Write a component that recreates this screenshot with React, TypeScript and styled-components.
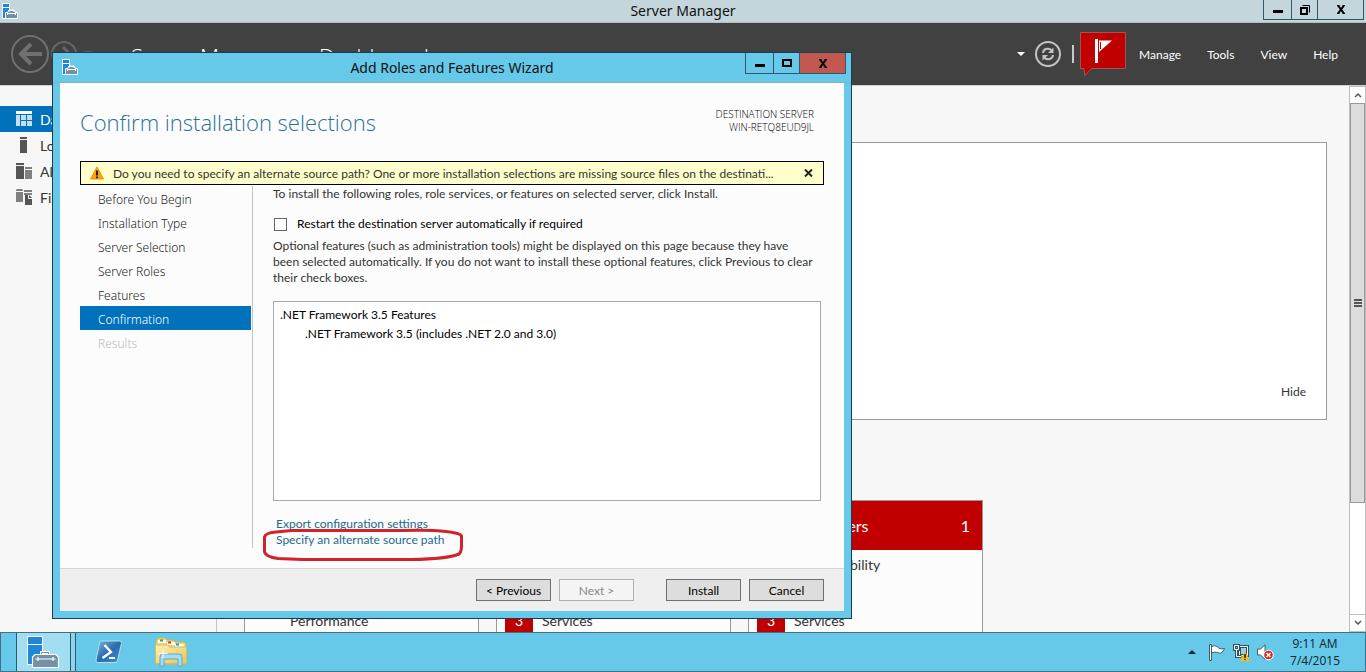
import React from "react";
import styled, { createGlobalStyle } from "styled-components";

const sky = "#66c9e9";
const red = "#c00000";
const blue = "#0072bc";
const titleFont = `"Noto Sans", "Open Sans", sans-serif`;
const lightFont = `"Open Sans", "Noto Sans", sans-serif`;

const GlobalStyle = createGlobalStyle`
  * { box-sizing: border-box; }
  body { margin: 0; }
  button, input { font: inherit; color: inherit; margin: 0; }
  svg { display: block; flex: none; }
`;

const Desktop = styled.div`
  position: relative;
  display: flex;
  flex-direction: column;
  height: 100vh;
  overflow: hidden;
  background: #f7f7f7;
  color: #333;
  font: 12px/16px Lato, "Open Sans", sans-serif;
`;

/* Window chrome */
const TitleBar = styled.header<{ $tone: string; $height: number; $line: string }>`
  display: grid;
  grid-template-columns: 120px 1fr 120px;
  flex: none;
  height: ${(p) => p.$height}px;
  background: ${(p) => p.$tone};
  border-bottom: 1px solid ${(p) => p.$line};
  color: #111;
`;
const TitleIcon = styled.span<{ $indent: number; $drop: number }>`
  padding: ${(p) => p.$drop}px 0 0 ${(p) => p.$indent}px;
`;
const WindowTitle = styled.h1`
  margin: 0;
  align-self: center;
  text-align: center;
  font-family: ${titleFont};
  font-size: 14px;
  line-height: 20px;
  font-weight: 400;
  white-space: nowrap;
`;
const WindowButtons = styled.div<{ $inset: number }>`
  display: flex;
  justify-content: flex-end;
  padding-right: ${(p) => p.$inset}px;
`;
const WindowButton = styled.button<{ $width: number; $height: number; $fill?: string }>`
  display: flex;
  align-items: center;
  justify-content: center;
  flex: none;
  width: ${(p) => p.$width}px;
  height: ${(p) => p.$height}px;
  padding: 0;
  border: 1px solid #2c5a6c;
  border-top: 0;
  background: ${(p) => p.$fill ?? "transparent"};
  & + & { margin-left: -1px; }
`;

/* Server Manager header */
const Banner = styled.div`
  display: flex;
  align-items: center;
  flex: none;
  height: 62px;
  padding: 0 28px 0 11px;
  background: #414141;
  color: #fff;
`;
const Crumb = styled.div`
  display: flex;
  gap: 13px;
  flex: 1;
  padding: 4px 0 0 38px;
  font-family: ${lightFont};
  font-size: 22px;
  line-height: 32px;
  font-weight: 300;
  white-space: nowrap;
`;
const IconButton = styled.button<{ $gap?: number }>`
  padding: 0;
  margin-left: ${(p) => p.$gap ?? 0}px;
  border: 0;
  background: none;
`;
const Separator = styled.span`
  width: 2px;
  height: 18px;
  margin: 0 6px 0 11px;
  background: #c8c8c8;
`;
const MenuBar = styled.nav`
  display: flex;
  gap: 26px;
  margin-left: 12px;
`;
const MenuButton = styled.button`
  padding: 2px 0 0;
  border: 0;
  background: none;
  color: #fff;
`;

/* Server Manager body */
const Workspace = styled.div`
  display: flex;
  flex: 1;
  min-height: 0;
  overflow: hidden;
  border-top: 1px solid #d0d0d0;
`;
const Sidebar = styled.nav`
  flex: none;
  width: 217px;
  padding-top: 20px;
  border-right: 1px solid #c4c4c4;
`;
const SideItem = styled.a<{ $active?: boolean }>`
  display: flex;
  align-items: center;
  gap: 8px;
  height: 26px;
  padding-left: 16px;
  background: ${(p) => (p.$active ? blue : "transparent")};
  color: ${(p) => (p.$active ? "#fff" : "#333")};
  font-size: 14px;
  text-decoration: none;
  white-space: nowrap;
`;
const SideLabel = styled.span`
  padding-top: 2px;
`;
const Content = styled.main`
  flex: 1;
  min-width: 0;
  overflow: hidden;
  padding: 56px 22px 0 27px;
`;
const Welcome = styled.section`
  display: flex;
  justify-content: flex-end;
  align-items: flex-end;
  height: 278px;
  padding: 0 20px 19px;
  border: 1px solid #999;
  background: #fff;
`;
const HideButton = styled.button`
  padding: 0;
  border: 0;
  background: none;
`;
const Tiles = styled.div`
  display: flex;
  gap: 17px;
  margin-top: 80px;
`;
const Tile = styled.section`
  flex: none;
  width: 235px;
  height: 180px;
  border: 1px solid #999;
  background: #fcfcfc;
`;
const TileHead = styled.div`
  display: flex;
  justify-content: space-between;
  align-items: center;
  height: 49px;
  padding: 0 12px 0 45px;
  background: ${red};
  color: #fff;
  font-size: 16px;
  line-height: 20px;
`;
const TileRow = styled.div`
  display: flex;
  align-items: center;
  gap: 9px;
  height: 28px;
  padding: 2px 0 0 8px;
  font-size: 14px;
`;
const Count = styled.span<{ $alert?: boolean }>`
  width: 28px;
  height: 24px;
  line-height: 24px;
  text-align: center;
  color: #fff;
  background: ${(p) => (p.$alert ? red : "transparent")};
`;

const ScrollBar = styled.div`
  display: flex;
  flex-direction: column;
  flex: none;
  width: 17px;
  border: 1px solid #bdbdbd;
  background: #fff;
`;
const ScrollArrow = styled.button`
  display: flex;
  align-items: center;
  justify-content: center;
  height: 16px;
  padding: 0;
  border: 0;
  background: #fff;
`;
const ScrollThumb = styled.div`
  display: flex;
  align-items: center;
  justify-content: center;
  flex: 400;
  border: 1px solid #9a9a9a;
  background: #dcdcdc;
`;
const ScrollRest = styled.div`
  flex: 111;
  border-bottom: 1px solid #bdbdbd;
`;

/* Wizard dialog */
const Dialog = styled.section`
  position: absolute;
  top: 52px;
  left: 52px;
  width: 800px;
  max-width: calc(100% - 52px);
  padding: 0 7px 7px;
  border: 1px solid #1d3f4d;
  background: ${sky};
`;
const DialogBar = styled.div`
  margin: 0 -7px;
`;
const Page = styled.div`
  background: #fcfcfc;
`;
const PageHead = styled.div`
  display: flex;
  justify-content: space-between;
  padding: 25px 30px 25px 20px;
`;
const PageTitle = styled.h2`
  margin: 0;
  color: #2a7294;
  font-family: ${lightFont};
  font-size: 22px;
  line-height: 28px;
  font-weight: 300;
`;
const Destination = styled.div`
  color: #000;
  font-family: ${lightFont};
  font-size: 10px;
  font-weight: 300;
  line-height: 13px;
  text-align: right;
`;
const Notice = styled.div`
  display: flex;
  align-items: center;
  gap: 9px;
  height: 24px;
  margin: 0 20px;
  padding: 0 10px 0 9px;
  border: 1px solid #000;
  background: #ffffcc;
`;
const NoticeText = styled.span`
  flex: 1;
  min-width: 0;
  margin-right: 16px;
  padding-top: 2px;
  overflow: hidden;
  white-space: nowrap;
  text-overflow: ellipsis;
`;
const PageBody = styled.div`
  display: flex;
  padding: 1px 23px 20px 20px;
`;
const Steps = styled.nav`
  flex: none;
  width: 173px;
  padding-right: 1px;
  border-right: 1px solid #c4c4c4;
`;
const Step = styled.a<{ $state?: "current" | "disabled" }>`
  display: block;
  padding: 4px 0 0 18px;
  font-family: ${titleFont};
  font-weight: 300;
  line-height: 20px;
  text-decoration: none;
  background: ${(p) => (p.$state === "current" ? blue : "transparent")};
  color: ${(p) => (p.$state === "current" ? "#fff" : p.$state === "disabled" ? "#bbb" : "#222")};
`;
const Details = styled.div`
  flex: 1;
  min-width: 0;
  padding-left: 20px;
`;
const Para = styled.p`
  margin: 0;
`;
const CheckRow = styled.label`
  display: flex;
  align-items: center;
  gap: 10px;
  margin: 14px 0 6px 1px;
  color: #000;
`;
const CheckBox = styled.input`
  appearance: none;
  width: 13px;
  height: 13px;
  border: 1px solid #666;
  background: #fff;
`;
const Selections = styled.ul`
  height: 200px;
  margin: 15px 0;
  padding: 3px 6px;
  border: 1px solid #a8a8a8;
  background: #fff;
  color: #000;
  line-height: 19px;
  list-style: none;
`;
const SubList = styled.ul`
  margin: 0;
  padding-left: 25px;
  list-style: none;
`;
const Links = styled.div`
  position: relative;
  display: flex;
  flex-direction: column;
  align-items: flex-start;
  padding-left: 3px;
`;
const TextLink = styled.a`
  color: #1b6a8c;
  text-decoration: none;
`;
const Marker = styled.svg`
  position: absolute;
  top: 12px;
  left: -11px;
  pointer-events: none;
`;
const Footer = styled.footer`
  display: flex;
  justify-content: flex-end;
  gap: 8px;
  padding: 10px 20px;
  border-top: 1px solid #d6d6d6;
  background: #efefef;
`;
const PushButton = styled.button<{ $apart?: boolean }>`
  width: 75px;
  height: 22px;
  padding: 2px 0 0;
  margin-left: ${(p) => (p.$apart ? 24 : 0)}px;
  border: 1px solid #707070;
  background: #dddddd;
  color: #000;
  white-space: nowrap;
  &:disabled { border-color: #b0b0b0; background: #f4f4f4; color: #888; }
`;

/* Taskbar */
const Taskbar = styled.footer`
  display: flex;
  align-items: center;
  flex: none;
  height: 40px;
  padding-left: 15px;
  border: 1px solid #45707f;
  background: ${sky};
  color: #10242c;
`;
const AppStack = styled.div`
  display: flex;
  align-self: stretch;
  width: 60px;
  padding-right: 4px;
  border: solid #2f5866;
  border-width: 0 1px;
  background: #8ad4ee;
`;
const AppButton = styled.button<{ $active?: boolean; $gap?: number }>`
  display: flex;
  align-items: center;
  padding: 0 0 0 ${(p) => (p.$active ? 10 : 0)}px;
  margin-left: ${(p) => p.$gap ?? 0}px;
  border: 0;
  ${(p) => p.$active && "flex: 1; border-right: 1px solid #2f5866; background: #a2ddf2;"}
  ${(p) => !p.$active && "background: none;"}
`;
const Tray = styled.div`
  display: flex;
  align-items: center;
  gap: 7px;
  margin-left: auto;
  padding-right: 25px;
`;
const Clock = styled.time`
  margin-left: 9px;
  text-align: center;
  font-family: ${lightFont};
  line-height: 17px;
`;

function ToolboxIcon() {
  return (
    <svg width="32" height="32" viewBox="0 0 32 32" aria-hidden="true">
      <path d="M.5.500h15v28H.5z" fill="#1f87d8" stroke="#fff" />
      <path d="M0 8.500h16" stroke="#fff" />
      <path d="M14.500 19v-2.500h7V19" fill="none" stroke="#fff" strokeWidth="3" />
      <path d="M14.500 19v-2.500h7V19" fill="none" stroke="#7291a6" />
      <path d="M8 18.500h21l2.500 2.500v10.500H5.500V21z" fill="#7291a6" stroke="#fff" strokeWidth="1.200" />
      <path d="M8.500 23h20M11 21v4M26 21v4" stroke="#fff" strokeWidth="1.200" />
    </svg>
  );
}

function ToolboxIconSmall() {
  return (
    <svg width="16" height="16" viewBox="0 0 16 16" aria-hidden="true">
      <path d="M.5.500h7v15h-7z" fill="#1f87d8" stroke="#fff" />
      <path d="M0 4.500h8" stroke="#fff" />
      <path d="M3.500 15.500v-6h2l1.500-2.500h5l1.500 2.500h2v6z" fill="#7291a6" stroke="#fff" />
      <path d="M7 9V7.500h5V9M5 10.500h9M5.500 9.500v2.500M13.500 9.500v2.500" fill="none" stroke="#fff" />
    </svg>
  );
}

function MinimizeGlyph() {
  return (
    <svg width="10" height="9" viewBox="0 0 10 9" aria-hidden="true">
      <path d="M0 5h10v3H0z" fill="#000" />
    </svg>
  );
}

function CloseGlyph() {
  return (
    <svg width="10" height="9" viewBox="0 0 10 9" aria-hidden="true">
      <path d="M1 .5h2.500M6.500 .5H9M1 8.500h2.500M6.500 8.500H9" stroke="#000" />
      <path d="M2 .5l6 8M8 .5l-6 8" stroke="#000" strokeWidth="2" />
    </svg>
  );
}

function Warning({ size }: { size: number }) {
  return (
    <svg width={size} height={size} viewBox="0 0 14 14" aria-hidden="true">
      <path d="M7 1l6.500 12H.5z" fill="#f9a11b" stroke="#f39200" strokeWidth="1" strokeLinejoin="round" />
      <path d="M6 4.500h2V9.500H6zM6 10.500h2v1.800H6z" fill="#222" />
    </svg>
  );
}

function NavIcon({ kind }: { kind: string }) {
  return (
    <svg width="16" height="16" viewBox="0 0 16 16" aria-hidden="true">
      {kind === "dashboard" && (
        <>
          <path d="M0 0h16v3H0z" fill="#fff" />
          <path d="M0 4h4v11H0zM5 4h5v5H5zM5 10h5v5H5zM11 4h5v5h-5zM11 10h5v5h-5z" fill="#c3dff1" />
        </>
      )}
      {kind === "local" && <path d="M4 0h7v2H4zM4 3h7v13H4z" fill="#555" />}
      {kind === "all" && (
        <>
          <path d="M0 0h8v2H0zM0 3h8v13H0z" fill="#555" />
          <path d="M9 4h7v2H9zM9 7h7v9H9z" fill="#808080" />
        </>
      )}
      {kind === "files" && (
        <>
          <path d="M0 1l1-1h5l1 1v1H0zM0 3h7v10H0zM8 1h8v2H8z" fill="#808080" />
          <path d="M8 4h8v2H8z" fill="#808080" />
          <path d="M9 6h4l3 3v7H9z" fill="#555" />
          <path d="M12.500 6v3.500H16" stroke="#f7f7f7" fill="none" />
        </>
      )}
    </svg>
  );
}

const sideLinks = [
  { kind: "dashboard", label: "Dashboard" },
  { kind: "local", label: "Local Server" },
  { kind: "all", label: "All Servers" },
  { kind: "files", label: "File and Storage" },
];

type TileRowData = { label?: string; count?: number };
const tiles: { id: string; title?: string; total?: number; rows: TileRowData[] }[] = [
  { id: "storage", rows: [{}, {}, { label: "Performance" }] },
  { id: "local", rows: [{}, {}, { label: "Services", count: 3 }] },
  { id: "all", title: "All Servers", total: 1, rows: [{ label: "Manageability" }, {}, { label: "Services", count: 3 }] },
];

const steps: { label: string; state?: "current" | "disabled" }[] = [
  { label: "Before You Begin" },
  { label: "Installation Type" },
  { label: "Server Selection" },
  { label: "Server Roles" },
  { label: "Features" },
  { label: "Confirmation", state: "current" },
  { label: "Results", state: "disabled" },
];

function ManagerHeader() {
  return (
    <>
      <TitleBar $tone="#c4d6dc" $height={23} $line="#b0bfc5">
        <TitleIcon $indent={2} $drop={3}>
          <ToolboxIconSmall />
        </TitleIcon>
        <WindowTitle>Server Manager</WindowTitle>
        <WindowButtons $inset={2}>
          <WindowButton $width={29} $height={20} aria-label="Minimize"><MinimizeGlyph /></WindowButton>
          <WindowButton $width={27} $height={20} aria-label="Restore">
            <svg width="10" height="10" viewBox="0 0 10 10" aria-hidden="true">
              <path d="M1 3h6v6H1z" fill="none" stroke="#000" strokeWidth="2" />
              <path d="M2.500 .5h7v7" fill="none" stroke="#000" />
            </svg>
          </WindowButton>
          <WindowButton $width={47} $height={20} aria-label="Close"><CloseGlyph /></WindowButton>
        </WindowButtons>
      </TitleBar>
      <Banner>
        <IconButton aria-label="Back">
          <svg width="38" height="38" viewBox="0 0 38 38" aria-hidden="true">
            <circle cx="19" cy="19" r="18" fill="none" stroke="#707070" strokeWidth="2" />
            <path d="M31 19H10M20 9L10 19l10 10" fill="none" stroke="#707070" strokeWidth="4" />
          </svg>
        </IconButton>
        <IconButton $gap={2} aria-label="Forward">
          <svg width="26" height="26" viewBox="0 0 26 26" aria-hidden="true">
            <circle cx="13" cy="13" r="12" fill="none" stroke="#666" strokeWidth="2" />
            <path d="M6 13h13M12 6l7 7-7 7" fill="none" stroke="#666" strokeWidth="3" />
          </svg>
        </IconButton>
        <IconButton $gap={6} aria-label="History">
          <svg width="10" height="6" viewBox="0 0 10 6" aria-hidden="true">
            <path d="M0 0h10L5 6z" fill="#5a5a5a" />
          </svg>
        </IconButton>
        <Crumb>
          <span>Server Manager</span>
          <span>›</span>
          <span>Dashboard</span>
        </Crumb>
        <IconButton aria-label="Refresh options">
          <svg width="8" height="4" viewBox="0 0 8 4" aria-hidden="true">
            <path d="M0 0h8L4 4z" fill="#fff" />
          </svg>
        </IconButton>
        <IconButton $gap={10} aria-label="Refresh">
          <svg width="26" height="26" viewBox="0 0 26 26" aria-hidden="true">
            <circle cx="13" cy="13" r="12" fill="none" stroke="#c4c4c4" strokeWidth="2" />
            <path d="M8 12c.5-5 7-5.500 9-2M18 14c-.5 5-7 5.500-9 2" fill="none" stroke="#c4c4c4" strokeWidth="2" />
            <path d="M18.500 6.500v5.500h-5.500zM7.500 19.500V14H13z" fill="#c4c4c4" />
          </svg>
        </IconButton>
        <Separator />
        <IconButton aria-label="Notifications">
          <svg width="47" height="44" viewBox="0 0 47 44" aria-hidden="true">
            <path d="M.5.500h45v36H11.500L5 43.500l-1-7H.5z" fill={red} stroke="#a8524f" />
            <path d="M15 7h3v24h-3z" fill="#fff" />
            <path d="M19 8.500h13L19 20z" fill="#fff" />
            <path d="M20.500 10v7" stroke={red} />
          </svg>
        </IconButton>
        <MenuBar>
          <MenuButton>Manage</MenuButton>
          <MenuButton>Tools</MenuButton>
          <MenuButton>View</MenuButton>
          <MenuButton>Help</MenuButton>
        </MenuBar>
      </Banner>
    </>
  );
}

function ManagerBody() {
  return (
    <Workspace>
      <Sidebar>
        {sideLinks.map((item, i) => (
          <SideItem key={item.kind} href="#" $active={i === 0}>
            <NavIcon kind={item.kind} />
            <SideLabel>{item.label}</SideLabel>
          </SideItem>
        ))}
      </Sidebar>
      <Content>
        <Welcome>
          <HideButton>Hide</HideButton>
        </Welcome>
        <Tiles>
          {tiles.map((tile) => (
            <Tile key={tile.id}>
              <TileHead>
                <span>{tile.title}</span>
                <span>{tile.total}</span>
              </TileHead>
              {tile.rows.map((row, i) => (
                <TileRow key={i}>
                  <Count $alert={row.count !== undefined}>{row.count}</Count>
                  {row.label}
                </TileRow>
              ))}
            </Tile>
          ))}
        </Tiles>
      </Content>
      <ScrollBar>
        <ScrollArrow aria-label="Scroll up">
          <svg width="8" height="6" viewBox="0 0 8 6" aria-hidden="true">
            <path d="M1 5l3-3 3 3" fill="none" stroke="#555" strokeWidth="1.500" />
          </svg>
        </ScrollArrow>
        <ScrollThumb>
          <svg width="8" height="8" viewBox="0 0 8 8" aria-hidden="true">
            <path d="M0 1h8M0 4h8M0 7h8" stroke="#555" strokeWidth="2" />
          </svg>
        </ScrollThumb>
        <ScrollRest />
        <ScrollArrow aria-label="Scroll down">
          <svg width="8" height="6" viewBox="0 0 8 6" aria-hidden="true">
            <path d="M1 1l3 3 3-3" fill="none" stroke="#555" strokeWidth="1.500" />
          </svg>
        </ScrollArrow>
      </ScrollBar>
    </Workspace>
  );
}

function Wizard() {
  return (
    <Dialog role="dialog" aria-label="Add Roles and Features Wizard">
      <DialogBar>
        <TitleBar $tone={sky} $height={30} $line="#7fb3c6">
          <TitleIcon $indent={9} $drop={6}>
            <ToolboxIconSmall />
          </TitleIcon>
          <WindowTitle as="h2">Add Roles and Features Wizard</WindowTitle>
          <WindowButtons $inset={5}>
            <WindowButton $width={29} $height={21} aria-label="Minimize"><MinimizeGlyph /></WindowButton>
            <WindowButton $width={27} $height={21} aria-label="Maximize">
              <svg width="10" height="8" viewBox="0 0 10 8" aria-hidden="true">
                <path d="M1 1h8v6H1z" fill="none" stroke="#000" strokeWidth="2" />
              </svg>
            </WindowButton>
            <WindowButton $width={47} $height={21} $fill="#c2584e" aria-label="Close"><CloseGlyph /></WindowButton>
          </WindowButtons>
        </TitleBar>
      </DialogBar>
      <Page>
        <PageHead>
          <PageTitle>Confirm installation selections</PageTitle>
          <Destination>
            DESTINATION SERVER<br />WIN-RETQ8EUD9JL
          </Destination>
        </PageHead>
        <Notice>
          <Warning size={14} />
          <NoticeText>
            Do you need to specify an alternate source path? One or more installation selections are missing source files on the destinati...
          </NoticeText>
          <IconButton aria-label="Dismiss">
            <svg width="9" height="8" viewBox="0 0 9 8" aria-hidden="true">
              <path d="M1 .5l7 7M8 .5l-7 7" stroke="#222" strokeWidth="2" />
            </svg>
          </IconButton>
        </Notice>
        <PageBody>
          <Steps>
            {steps.map((step) => (
              <Step key={step.label} href="#" $state={step.state}>{step.label}</Step>
            ))}
          </Steps>
          <Details>
            <Para>To install the following roles, role services, or features on selected server, click Install.</Para>
            <CheckRow>
              <CheckBox type="checkbox" />
              Restart the destination server automatically if required
            </CheckRow>
            <Para>
              Optional features (such as administration tools) might be displayed on this page because they have
              <br />
              been selected automatically. If you do not want to install these optional features, click Previous to clear
              <br />
              their check boxes.
            </Para>
            <Selections>
              <li>
                .NET Framework 3.5 Features
                <SubList>
                  <li>.NET Framework 3.5 (includes .NET 2.0 and 3.0)</li>
                </SubList>
              </li>
            </Selections>
            <Links>
              <TextLink href="#">Export configuration settings</TextLink>
              <TextLink href="#">Specify an alternate source path</TextLink>
              <Marker width="202" height="34" viewBox="0 0 202 34" aria-hidden="true">
                <path
                  d="M14 4Q3 5 2.500 9V24Q4 29 16 30.500L40 31.500H150Q185 31 197 26Q199.500 24 199.500 18V8Q198 5 184 3.500Q168 1.500 140 2.500H30Z"
                  fill="none"
                  stroke="#d0242c"
                  strokeWidth="3"
                  strokeLinejoin="round"
                />
              </Marker>
            </Links>
          </Details>
        </PageBody>
        <Footer>
          <PushButton>&lt; Previous</PushButton>
          <PushButton disabled>Next &gt;</PushButton>
          <PushButton $apart>Install</PushButton>
          <PushButton>Cancel</PushButton>
        </Footer>
      </Page>
    </Dialog>
  );
}

function SystemTaskbar() {
  return (
    <Taskbar>
      <AppStack>
        <AppButton $active aria-label="Server Manager"><ToolboxIcon /></AppButton>
      </AppStack>
      <AppButton $gap={19} aria-label="PowerShell">
        <svg width="28" height="24" viewBox="0 0 28 24" aria-hidden="true">
          <defs>
            <linearGradient id="ps" x1="0" y1="0" x2="1" y2="1">
              <stop offset="0" stopColor="#7cb6dc" />
              <stop offset=".5" stopColor="#2a6cae" />
              <stop offset="1" stopColor="#3f8fd0" />
            </linearGradient>
          </defs>
          <path d="M6.500 1h18q2.500 0 2 2.500l-4 17q-.5 2-2.500 2H3q-2.500 0-2-2.500l3.500-17Q5 1 6.500 1z" fill="url(#ps)" stroke="#b9dcf0" />
          <path d="M9.500 5l6.500 7-8.500 6" fill="none" stroke="#fff" strokeWidth="2.400" />
          <path d="M14 18h6" stroke="#fff" strokeWidth="2" />
        </svg>
      </AppButton>
      <AppButton $gap={31} aria-label="File Explorer">
        <svg width="34" height="30" viewBox="0 0 34 30" aria-hidden="true">
          <defs>
            <linearGradient id="folder" x1="0" y1="0" x2="1" y2="1">
              <stop offset="0" stopColor="#fbeeb0" />
              <stop offset="1" stopColor="#e6c85a" />
            </linearGradient>
          </defs>
          <path d="M2 4l2-3h7l2 2h6l2 2h9l2 2v20H2z" fill="#ecd678" stroke="#d3b64e" />
          <path d="M4 3h8v3H4zM13 5h8v3h-8zM21 7h9v3h-9z" fill="#fff" />
          <path d="M6 2.500h3v2H6z" fill="#2fa84f" />
          <path d="M14 4.500h3v2h-3z" fill="#d23b2f" />
          <path d="M22 6.500h3v2h-3z" fill="#2a8fd8" />
          <path d="M1.500 8h12l2 2h17v16.500h-31z" fill="url(#folder)" stroke="#d9bd58" />
          <path d="M6 29v-9q0-3 3-3h16q3 0 3 3v9h-4v-7H10v7z" fill="#a8dcf2" stroke="#5ca8cc" />
          <path d="M9 12v9M4.500 16.500h9" stroke="#fff" />
        </svg>
      </AppButton>
      <Tray>
        <IconButton aria-label="Show hidden icons">
          <svg width="8" height="4" viewBox="0 0 8 4" aria-hidden="true"><path d="M4 0l4 4H0z" fill="#10242c" /></svg>
        </IconButton>
        <IconButton $gap={6} aria-label="Action Center">
          <svg width="17" height="17" viewBox="0 0 17 17" aria-hidden="true">
            <path d="M2.500 2.500q3-1.500 6 0l1 1.500q3 1.500 6 .5-1 3.500-3.500 4.500-2 .5-3.500-.500-3-1-6 .5z" fill="#fff" stroke="#42606c" />
            <path d="M.500 .500h2v16h-2z" fill="#fff" stroke="#42606c" />
          </svg>
        </IconButton>
        <IconButton aria-label="Network">
          <svg width="17" height="17" viewBox="0 0 17 17" aria-hidden="true">
            <path d="M6.500 2.500h8v9h-8z" fill="#8fd3ea" stroke="#34505c" strokeWidth="3" />
            <path d="M6.500 2.500h8v9h-8z" fill="none" stroke="#fff" />
            <path d="M1.500 1.500h4v4h-4zM3.500 5v7.500h5" fill="none" stroke="#34505c" strokeWidth="3" />
            <path d="M1.500 1.500h4v4h-4zM3.500 5v7.500h5" fill="none" stroke="#fff" />
            <path d="M12 7l5 10H7z" fill="#fbb917" />
            <path d="M12 10v4M12 15v1" stroke="#222" strokeWidth="1.500" />
          </svg>
        </IconButton>
        <IconButton aria-label="Volume muted">
          <svg width="17" height="17" viewBox="0 0 17 17" aria-hidden="true">
            <path d="M.5 5h3L8 .8v14.500L3.500 11H.5z" fill="#fff" stroke="#42606c" />
            <circle cx="11.500" cy="11" r="4.800" fill="#d42b24" stroke="#fff" />
            <path d="M9.500 9l4 4M13.500 9l-4 4" stroke="#fff" strokeWidth="1.500" />
          </svg>
        </IconButton>
        <Clock>9:11 AM<br />7/4/2015</Clock>
      </Tray>
    </Taskbar>
  );
}

export default function App() {
  return (
    <Desktop>
      <GlobalStyle />
      <ManagerHeader />
      <ManagerBody />
      <SystemTaskbar />
      <Wizard />
    </Desktop>
  );
}
